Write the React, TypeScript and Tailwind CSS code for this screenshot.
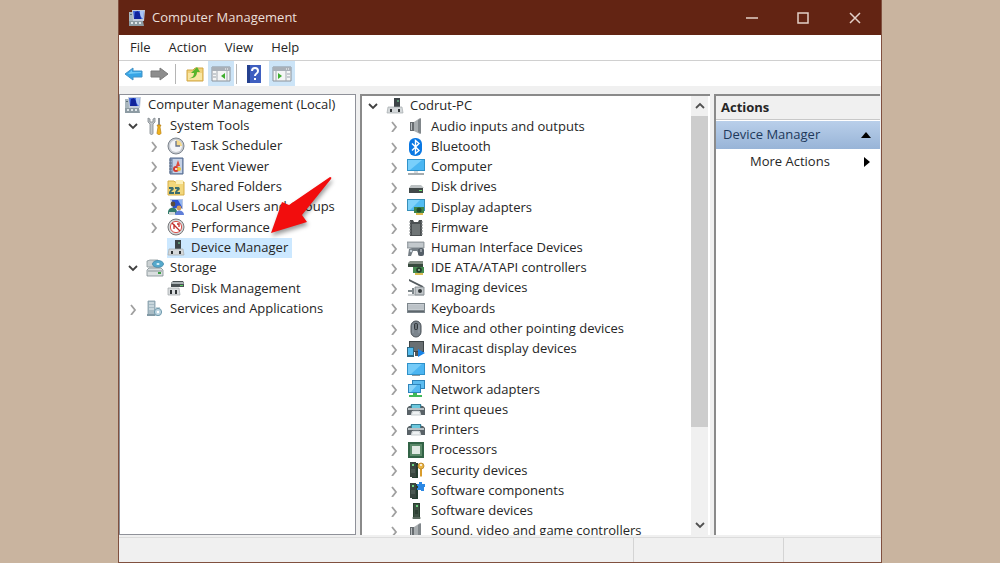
import type { ReactNode } from 'react';

interface TreeItem {
    label: string;
    icon: ReactNode;
    depth: 0 | 1 | 2;
    state?: 'open' | 'closed';
    selected?: boolean;
}

function Icon({ children }: { children: ReactNode }) {
    return (
        <svg viewBox="0 0 18 18" className="size-[18px] shrink-0" aria-hidden="true">
            {children}
        </svg>
    );
}

const computerMgmt = (
    <Icon>
        <path d="M1 3h4v11H1z" fill="#a9b6bd" />
        <path d="M2 5h2v1H2z" fill="#5d7078" />
        <path d="M4 1h13l-1 11H5z" fill="#c3ccda" />
        <path d="M5 2h11l-1 8H6z" fill="#3f66dc" />
        <path d="M12 2h4l-1 8-3-3z" fill="#a9c4f4" />
        <path d="M7 3l3-1 2 3 1 5H6z" fill="#10239c" />
        <path d="M1 12h14l1 5H1z" fill="#8d9ba3" />
        <path d="M3 13h2v2H3zM7 13h2v2H7zM11 13h2v2h-2z" fill="#dfe6ea" />
    </Icon>
);

const tools = (
    <Icon>
        <path d="M2 1v4l2 2v9c0 2 3 2 3 0V7l2-2V1L7 2v3H4V2z" fill="#c2c7cb" stroke="#7f868b" strokeWidth=".8" />
        <path d="M12 1h2v8h-2z" fill="#8a8f94" />
        <path d="M11 8h4l-1 2 1 6c0 2-4 2-4 0l1-6z" fill="#f0b21c" stroke="#b87c0c" strokeWidth=".7" />
    </Icon>
);

const clock = (
    <Icon>
        <circle cx="9" cy="9" r="8" fill="#c7cbd1" stroke="#7c838c" />
        <circle cx="9" cy="9" r="6" fill="#f4f5f8" />
        <path d="M9 3a6 6 0 0 1 6 6H9z" fill="#f5d889" />
        <path d="M9 4v5h4" fill="none" stroke="#66718a" strokeWidth="1.3" />
    </Icon>
);

const eventViewer = (
    <Icon>
        <path d="M3 1h13v16H3z" fill="#91a5c5" stroke="#53688d" />
        <path d="M6 2h9v14H6z" fill="#c5d2e6" />
        <path d="M2 3h3M2 6h3M2 9h3M2 12h3M2 15h3" stroke="#63728a" />
        <path d="M11 3l2 6h-4z" fill="#df4c3c" />
        <circle cx="9" cy="12" r="3" fill="#d33b31" />
        <circle cx="12" cy="12" r="2" fill="#efc33c" />
        <circle cx="9" cy="12" r="1" fill="#fff" />
    </Icon>
);

const sharedFolders = (
    <Icon>
        <path d="M1 3h6l1 1h9v13H1z" fill="#f2d77c" stroke="#d6ad45" />
        <path d="M9 2h7v4H9z" fill="#fbefb9" />
        <path d="M2 9h4l1 2-3 3h3v2H2v-2l2-3H2z" fill="#3b6d70" />
        <path d="M8 9h4l1 2-3 3h3v2H8v-2l2-3H8z" fill="#3b6d70" />
    </Icon>
);

const users = (
    <Icon>
        <path d="M3 1h13v10H5z" fill="#b8c6e4" />
        <path d="M5 2h10v8H6z" fill="#2b52cf" />
        <path d="M11 2h4v7z" fill="#93b5ee" />
        <circle cx="6" cy="6" r="2.4" fill="#5b4c3c" />
        <path d="M1 14c0-5 9-6 9 0v2H1z" fill="#347b6b" />
        <circle cx="12" cy="10" r="2.4" fill="#d29b5a" />
        <path d="M8 17c0-6 9-6 9 0z" fill="#5f7ed8" />
        <path d="M2 14h6v3H2z" fill="#d5dad8" />
    </Icon>
);

const performance = (
    <Icon>
        <circle cx="9" cy="9" r="8" fill="#d4d5d6" stroke="#77797c" />
        <circle cx="9" cy="9" r="5.6" fill="#fff" stroke="#d9524d" />
        <path d="M5 5l8 8M7 11V6M10 6h2v3" fill="none" stroke="#c12b29" strokeWidth="1.3" />
    </Icon>
);

const deviceManager = (
    <Icon>
        <path d="M8 1h6v9H8z" fill="#3d4447" />
        <path d="M11 3h2v2h-2z" fill="#5d9574" />
        <path d="M2 10h14l1 6H1z" fill="#d5d9db" stroke="#a5abae" strokeWidth=".7" />
        <path d="M4 12h2v3H4zM12 12h2v3h-2z" fill="#2f3335" />
    </Icon>
);

const storage = (
    <Icon>
        <path d="M1 2l3-1h8l-1 7H1z" fill="#cbd1d3" stroke="#8c979b" strokeWidth=".8" />
        <ellipse cx="12" cy="5" rx="5.5" ry="3.5" fill="#55a9cc" stroke="#3d86a8" strokeWidth=".8" />
        <ellipse cx="12" cy="5" rx="1.6" ry="1" fill="#e1f5fc" />
        <path d="M1 11l2-2h12l2 2v6H1z" fill="#d9dedf" stroke="#7f8b90" strokeWidth=".8" />
        <path d="M2 12h14" stroke="#8c979b" />
        <path d="M12 13h3v2h-3z" fill="#3e9e47" />
    </Icon>
);

const diskMgmt = (
    <Icon>
        <path d="M4 4l2-2h10l1 2v4H4z" fill="#4a5154" />
        <path d="M5 3h11l1 2H4z" fill="#aab1b4" />
        <path d="M13 6h3v1h-3z" fill="#58d05e" />
        <path d="M1 9h11l1 7H1z" fill="#dadddf" stroke="#9ea4a7" strokeWidth=".7" />
        <path d="M3 11h2v4H3zM8 11h2v4H8z" fill="#303537" />
    </Icon>
);

const services = (
    <Icon>
        <path d="M2 1h7v14H2z" fill="#a9bcc5" stroke="#7f98a4" strokeWidth=".8" />
        <path d="M3 3h5M3 6h5M3 9h5" stroke="#e7f0f4" />
        <path d="M9 7h5v9H9z" fill="#c3d3da" />
        <circle cx="12" cy="12" r="3.6" fill="#bcd5e1" stroke="#6f9aad" />
        <circle cx="12" cy="12" r="1.2" fill="#fff" />
        <path d="M1 14h8v2H1z" fill="#8199a5" />
    </Icon>
);

const speaker = (
    <Icon>
        <path d="M3 5h4v9H3z" fill="#676c70" />
        <path d="M7 5l6-4v16l-6-3z" fill="#a9aeb1" />
        <path d="M11 3l3-2v16l-3-2z" fill="#81878b" />
        <path d="M4 6h1v7H4z" fill="#b9bdc0" />
    </Icon>
);

const bluetooth = (
    <Icon>
        <rect x="2" y="0" width="13" height="18" rx="6" fill="#0a78e3" />
        <path d="M5 5.5l7 7-3.500 3v-13l3.500 3-7 7" fill="none" stroke="#fff" strokeWidth="1.4" />
    </Icon>
);

const computer = (
    <Icon>
        <path d="M0 1h18v12H0z" fill="#2f93cb" />
        <path d="M1 2h16v10H1z" fill="#4bb6f2" />
        <path d="M1 2h14L3 12H1z" fill="#79cffb" />
        <path d="M7 13h4v2H7z" fill="#d5dadd" />
        <path d="M1 15h16v2H1z" fill="#a4abaf" />
    </Icon>
);

const disk = (
    <Icon>
        <path d="M4 7h10l3 3H2z" fill="#bcc1c3" />
        <path d="M2 10h14v5H2z" fill="#414849" />
        <path d="M12 12h3v1h-3z" fill="#6ae56a" />
    </Icon>
);

const displayAdapter = (
    <Icon>
        <path d="M0 1h18v12H0z" fill="#378fb9" />
        <path d="M1 2h16v10H1z" fill="#52bcf3" />
        <path d="M1 2h12L3 12H1z" fill="#7fd2fa" />
        <path d="M7 9h10v6H7z" fill="#3d8448" />
        <circle cx="12" cy="12" r="2.5" fill="#234d2c" />
        <path d="M9 15h7v2H9z" fill="#dcb94d" />
    </Icon>
);

const firmware = (
    <Icon>
        <path d="M3 1h3l1 2h4l1-2h3v16H3z" fill="#4a4f51" />
        <path d="M5 5h8v11H5z" fill="#6f7576" />
        <path d="M2 3h2M2 6h2M2 9h2M2 12h2M2 15h2M14 3h2M14 6h2M14 9h2M14 12h2M14 15h2" stroke="#868b8d" />
    </Icon>
);

const hid = (
    <Icon>
        <path d="M0 3h17v6H0z" fill="#b3babf" stroke="#838b91" strokeWidth=".8" />
        <path d="M2 5h14M2 7h14" stroke="#d2d7da" />
        <path d="M2 10l3-1h6l2 1v4h-2l-1-2H6l-2 5H1z" fill="#747d84" />
        <rect x="11" y="9" width="6" height="8" rx="2" fill="#555f68" />
        <path d="M14 10v3" stroke="#d8dee1" />
        <circle cx="4" cy="12" r="1.2" fill="#c6d1db" />
    </Icon>
);

const ide = (
    <Icon>
        <path d="M1 4l2-2h13v5H1z" fill="#859087" />
        <path d="M1 5h15v3H1z" fill="#384a3e" />
        <path d="M6 8h11v6H6z" fill="#438b50" />
        <circle cx="12" cy="11" r="2.8" fill="#243e2d" />
        <circle cx="12" cy="11" r="1" fill="#9cc3a1" />
        <path d="M8 14h8v2H8z" fill="#d9bd54" />
    </Icon>
);

const imaging = (
    <Icon>
        <path d="M2 0l14 7v2L2 2z" fill="#555c60" />
        <path d="M8 8h9v8H8z" fill="#c2c7ca" stroke="#777f83" strokeWidth=".8" />
        <circle cx="13" cy="12" r="2" fill="#33393c" />
        <path d="M1 11h6v2H1zM5 9h2v6H5z" fill="#7e878b" />
        <path d="M1 16h16" stroke="#9ca3a7" />
    </Icon>
);

const keyboard = (
    <Icon>
        <path d="M0 4h18v10H0z" fill="#7d868c" />
        <path d="M1 5h16v6H1z" fill="#c6ccd1" />
        <path d="M1 7h16M1 9h16" stroke="#b2b9be" />
        <path d="M1 12h16v1H1z" fill="#5d666c" />
    </Icon>
);

const mouse = (
    <Icon>
        <rect x="4" y="1" width="10" height="16" rx="5" fill="#7c858d" stroke="#4a5157" />
        <rect x="7" y="3" width="4" height="7" rx="2" fill="#30363a" />
        <path d="M9 4v5" stroke="#a4adb4" />
        <path d="M6 5v8M12 5v8" stroke="#a4adb4" strokeWidth=".7" />
    </Icon>
);

const miracast = (
    <Icon>
        <path d="M2 1h15v11H2z" fill="#3f4547" />
        <path d="M3 2h13v9H3z" fill="#696f72" />
        <path d="M0 7h7v10H0z" fill="#306983" />
        <path d="M1 8h5v7H1z" fill="#54bcf0" />
        <path d="M11 9v8l7-4z" fill="#1683e8" />
        <path d="M8 12h3v4H8z" fill="#555" />
    </Icon>
);

const monitor = (
    <Icon>
        <path d="M0 3h18v12H0z" fill="#2f91c9" />
        <path d="M1 4h16v10H1z" fill="#4cb5f1" />
        <path d="M1 4h14L4 14H1z" fill="#75cbf8" />
        <path d="M5 15h8v1H5z" fill="#8d999f" />
    </Icon>
);

const network = (
    <Icon>
        <path d="M5 0h13v9H5z" fill="#2e83b8" />
        <path d="M6 1h11v7H6z" fill="#5cbcf0" />
        <path d="M1 4h13v9H1z" fill="#2d83bb" />
        <path d="M2 5h11v7H2z" fill="#54b8f1" />
        <path d="M2 5h8l-6 7H2z" fill="#87d2f8" />
        <path d="M6 13h4v2h5v2H2v-2h4z" fill="#42ba57" />
    </Icon>
);

const printer = (
    <Icon>
        <path d="M4 3h10l1 4H3z" fill="#357e95" />
        <path d="M5 4h8v3H5z" fill="#6cc8dd" />
        <path d="M0 7l2-2h2v2h10V5h2l2 2v7h-4l-1-4H5l-1 4H0z" fill="#596267" />
        <path d="M1 7h16v2H1z" fill="#b7c0c4" />
        <path d="M6 10h6l2 4H4z" fill="#eef1f2" stroke="#a9b2b6" strokeWidth=".6" />
    </Icon>
);

const processor = (
    <Icon>
        <path d="M1 1h16v16H1z" fill="#326346" />
        <path d="M3 3h12v12H3z" fill="#5c8a6a" />
        <path d="M5 5h8v8H5z" fill="#e1e9e3" />
    </Icon>
);

const tower = (
    <>
        <path d="M5 2h6v15H5z" fill="#253d30" />
        <path d="M3 1h6v15H3z" fill="#3a4740" />
        <path d="M5 3h2v2H5z" fill="#6ed57f" />
        <path d="M4 9h4M4 11h4" stroke="#5f6f66" />
    </>
);

const security = (
    <Icon>
        {tower}
        <path d="M13 8h2v7l-1 1-1-1z" fill="#d99c2c" />
        <circle cx="14" cy="5" r="3" fill="#e7b343" stroke="#bd8423" strokeWidth=".8" />
        <circle cx="14" cy="4" r="1" fill="#fff" />
    </Icon>
);

const component = (
    <Icon>
        {tower}
        <path d="M10 2h2V0h3v2h3v3h-1v4h-3V8h-4V6h1V4h-1z" fill="#2b88e4" />
    </Icon>
);

const softwareDevice = (
    <Icon>
        <path d="M6 1h7v16H6z" fill="#28402f" />
        <path d="M7 2h5v13H7z" fill="#3f5145" />
        <path d="M9 3h2v2H9z" fill="#6ed57f" />
        <path d="M8 9h3M8 11h3" stroke="#1e3025" />
        <path d="M5 16h9" stroke="#8b928e" />
    </Icon>
);

const consoleItems: TreeItem[] = [
    { label: 'Computer Management (Local)', icon: computerMgmt, depth: 0 },
    { label: 'System Tools', icon: tools, depth: 1, state: 'open' },
    { label: 'Task Scheduler', icon: clock, depth: 2, state: 'closed' },
    { label: 'Event Viewer', icon: eventViewer, depth: 2, state: 'closed' },
    { label: 'Shared Folders', icon: sharedFolders, depth: 2, state: 'closed' },
    { label: 'Local Users and Groups', icon: users, depth: 2, state: 'closed' },
    { label: 'Performance', icon: performance, depth: 2, state: 'closed' },
    { label: 'Device Manager', icon: deviceManager, depth: 2, selected: true },
    { label: 'Storage', icon: storage, depth: 1, state: 'open' },
    { label: 'Disk Management', icon: diskMgmt, depth: 2 },
    { label: 'Services and Applications', icon: services, depth: 1, state: 'closed' },
];

const deviceItems: TreeItem[] = [
    { label: 'Codrut-PC', icon: deviceManager, depth: 1, state: 'open' },
    { label: 'Audio inputs and outputs', icon: speaker, depth: 2, state: 'closed' },
    { label: 'Bluetooth', icon: bluetooth, depth: 2, state: 'closed' },
    { label: 'Computer', icon: computer, depth: 2, state: 'closed' },
    { label: 'Disk drives', icon: disk, depth: 2, state: 'closed' },
    { label: 'Display adapters', icon: displayAdapter, depth: 2, state: 'closed' },
    { label: 'Firmware', icon: firmware, depth: 2, state: 'closed' },
    { label: 'Human Interface Devices', icon: hid, depth: 2, state: 'closed' },
    { label: 'IDE ATA/ATAPI controllers', icon: ide, depth: 2, state: 'closed' },
    { label: 'Imaging devices', icon: imaging, depth: 2, state: 'closed' },
    { label: 'Keyboards', icon: keyboard, depth: 2, state: 'closed' },
    { label: 'Mice and other pointing devices', icon: mouse, depth: 2, state: 'closed' },
    { label: 'Miracast display devices', icon: miracast, depth: 2, state: 'closed' },
    { label: 'Monitors', icon: monitor, depth: 2, state: 'closed' },
    { label: 'Network adapters', icon: network, depth: 2, state: 'closed' },
    { label: 'Print queues', icon: printer, depth: 2, state: 'closed' },
    { label: 'Printers', icon: printer, depth: 2, state: 'closed' },
    { label: 'Processors', icon: processor, depth: 2, state: 'closed' },
    { label: 'Security devices', icon: security, depth: 2, state: 'closed' },
    { label: 'Software components', icon: component, depth: 2, state: 'closed' },
    { label: 'Software devices', icon: softwareDevice, depth: 2, state: 'closed' },
    { label: 'Sound, video and game controllers', icon: speaker, depth: 2, state: 'closed' },
];

const indent = { 0: 'pl-[4px]', 1: 'pl-[5px]', 2: 'pl-[26px]' };

function Chevron({ d, className }: { d: string; className: string }) {
    return (
        <svg viewBox="0 0 12 12" className={`size-3 fill-none ${className}`} strokeWidth="1.8" aria-hidden="true">
            <path d={d} />
        </svg>
    );
}

function Tree({ items, label, className }: { items: TreeItem[]; label: string; className: string }) {
    return (
        <ul role="tree" aria-label={label} className={`flex shrink-0 flex-col ${className}`}>
            {items.map((item) => (
                <li
                    key={item.label}
                    role="treeitem"
                    aria-selected={item.selected ?? false}
                    className={`flex min-h-0 flex-1 items-center ${indent[item.depth]}`}
                >
                    {item.depth > 0 && (
                        <span className="flex w-[21px] shrink-0">
                            {item.state && (
                                <button aria-label={`Toggle ${item.label}`} className="flex p-[2px]">
                                    {item.state === 'open' ? (
                                        <Chevron d="M2 4l4 4 4-4" className="stroke-[#404040]" />
                                    ) : (
                                        <Chevron d="M4 2l4 5-4 5" className="stroke-[#a0a0a0]" />
                                    )}
                                </button>
                            )}
                        </span>
                    )}
                    <button
                        className={`flex h-full items-center gap-[6px] pr-[4px] whitespace-nowrap ${item.selected ? 'bg-[#cce8ff]' : ''}`}
                    >
                        {item.icon}
                        {item.label}
                    </button>
                </li>
            ))}
        </ul>
    );
}

function PaneIcon({ flip }: { flip?: boolean }) {
    return (
        <svg viewBox="0 0 20 16" className="h-4 w-5" aria-hidden="true">
            <path d="M1 1h18v14H1z" fill="#f4f5f6" stroke="#8b929a" />
            <path d="M1 1h18v4H1z" fill="#a9b0b8" />
            <path d="M14 3h1M16 3h1" stroke="#fff" />
            <path d={flip ? 'M14 5v10M4 5v10' : 'M6 5v10M16 5v10'} stroke="#a3aab1" />
            <path d={flip ? 'M6 7v6l4-3z' : 'M14 7v6l-4-3z'} fill="#3fae2e" />
            <path d={flip ? 'M15 8h3M15 11h3' : 'M2 8h3M2 11h3'} stroke="#9aa3ac" />
        </svg>
    );
}

function Toolbar() {
    return (
        <div role="toolbar" className="flex h-[25px] shrink-0 items-center bg-white pl-[5px]">
            <button aria-label="Back" className="flex">
                <svg viewBox="0 0 20 16" className="h-4 w-5">
                    <path d="M1 8l8-6v3h9v6H9v3z" fill="#36a5e6" stroke="#4593c6" />
                    <path d="M4 8l4-4v2h9v1z" fill="#6fcaf8" />
                </svg>
            </button>
            <button aria-label="Forward" className="ml-[5px] flex">
                <svg viewBox="0 0 20 16" className="h-4 w-5">
                    <path d="M19 8l-8-6v3H2v6h9v3z" fill="#8d8d8d" stroke="#7b7b7b" />
                </svg>
            </button>
            <span className="mx-[6px] h-5 w-px bg-[#b5b5b5]" />
            <button aria-label="Up one level" className="flex w-[26px] justify-center">
                <svg viewBox="0 0 18 18" className="size-[18px]">
                    <path d="M1 5h6l2-2h8v13H1z" fill="#f1d27a" stroke="#d1a645" />
                    <path d="M2 8h14v7H2z" fill="#f9e6a4" />
                    <path d="M3 13c3 0 5-2 5-5H5l6-6 3 5h-3c0 4-3 7-8 6z" fill="#58b52c" />
                </svg>
            </button>
            <button aria-label="Show or hide console tree" className="flex h-full w-[26px] items-center justify-center bg-[#cce4f7]">
                <PaneIcon />
            </button>
            <span className="mx-[2px] h-5 w-px bg-[#b5b5b5]" />
            <button aria-label="Help" className="flex w-[30px] justify-center">
                <svg viewBox="0 0 16 18" className="h-[18px] w-4">
                    <path d="M1 0h14v18H1z" fill="#3f5fc0" />
                    <path d="M1 0h3v18H1z" fill="#24408f" />
                    <path d="M6 6c0-4 6-4 6 0 0 3-3 2-3 5" fill="none" stroke="#fff" strokeWidth="2" />
                    <path d="M8 13h2v2H8z" fill="#fff" />
                </svg>
            </button>
            <button aria-label="Show or hide action pane" className="flex h-full w-[26px] items-center justify-center bg-[#cce4f7]">
                <PaneIcon flip />
            </button>
        </div>
    );
}

function TitleBar() {
    return (
        <header className="flex h-[35px] shrink-0 items-center bg-[#632413] pl-[9px] text-[#eadfd9]">
            {computerMgmt}
            <h1 className="ml-[6px] flex-1">Computer Management</h1>
            <button aria-label="Minimize" className="flex w-[51px] justify-center">
                <svg viewBox="0 0 12 12" className="size-3 fill-none stroke-[#e3d0c8]">
                    <path d="M0 6h12" strokeWidth="1.5" />
                </svg>
            </button>
            <button aria-label="Maximize" className="flex w-[51px] justify-center">
                <svg viewBox="0 0 12 12" className="size-3 fill-none stroke-[#e3d0c8]">
                    <path d="M1 1h10v10H1z" strokeWidth="1.5" />
                </svg>
            </button>
            <button aria-label="Close" className="flex w-[53px] justify-center">
                <svg viewBox="0 0 12 12" className="size-3 fill-none stroke-[#e3d0c8]">
                    <path d="M1 1l10 10M11 1L1 11" strokeWidth="1.5" />
                </svg>
            </button>
        </header>
    );
}

function Scrollbar() {
    return (
        <div className="mr-[2px] flex w-[17px] shrink-0 flex-col items-center bg-[#f0f0f0]">
            <button aria-label="Scroll up" className="flex h-[20px] items-center">
                <Chevron d="M2 8l4-4 4 4" className="stroke-[#505050]" />
            </button>
            <div className="min-h-0 w-full flex-1">
                <div className="h-[78%] bg-[#cdcdcd]" />
            </div>
            <button aria-label="Scroll down" className="flex h-[20px] items-center">
                <Chevron d="M2 4l4 4 4-4" className="stroke-[#505050]" />
            </button>
        </div>
    );
}

function Actions() {
    return (
        <aside className="flex w-[166px] shrink-0 flex-col border-t-2 border-l-2 border-[#8a8a8a] bg-white">
            <h2 className="h-[24px] border-b border-[#c8c8c8] bg-[#f0f0f0] pl-[5px] leading-[22px] font-bold">Actions</h2>
            <button className="mt-px flex h-[28px] items-center justify-between bg-linear-to-b from-[#b9cfea] to-[#98b4d7] pr-[9px] pl-[7px] text-[#1e395b]">
                Device Manager
                <svg viewBox="0 0 10 6" className="h-[6px] w-[10px]">
                    <path d="M0 6l5-6 5 6z" />
                </svg>
            </button>
            <button className="flex h-[26px] items-center justify-between pr-[10px] pl-[34px]">
                More Actions
                <svg viewBox="0 0 6 10" className="h-[10px] w-[6px]">
                    <path d="M0 0l6 5-6 5z" />
                </svg>
            </button>
        </aside>
    );
}

function RedArrow() {
    return (
        <svg
            viewBox="0 0 66 62"
            className="pointer-events-none absolute top-[81px] left-[150px] h-[62px] w-[66px] drop-shadow-[1px_3px_2px_rgba(0,0,0,0.4)]"
            aria-hidden="true"
        >
            <path d="M1 57L12 26l7 3L60 1q2 0 1 2L32 39l5 7z" fill="#f20d0d" />
        </svg>
    );
}

export default function App() {
    return (
        <div className="h-screen bg-[#c9b49f] px-[118px] font-['Open_Sans','Noto_Sans',sans-serif] text-[13px] text-[#262626]">
            <div className="flex h-full flex-col border-x border-b border-[#80503f] bg-[#f0f0f0]">
                <TitleBar />
                <nav className="flex h-[26px] shrink-0 items-center gap-[18px] border-b border-[#d0d0d0] bg-white pl-[11px]">
                    <button>File</button>
                    <button>Action</button>
                    <button>View</button>
                    <button>Help</button>
                </nav>
                <Toolbar />
                <main className="mt-[8px] flex min-h-0 flex-1 gap-[4px] pr-px">
                    <section className="relative w-[237px] shrink-0 border border-[#8f9199] bg-white">
                        <Tree items={consoleItems} label="Console" className="h-[224px]" />
                        <RedArrow />
                    </section>
                    <section className="flex min-w-0 flex-1 border-t-2 border-l-2 border-[#8a8a8a] bg-white">
                        <div className="-ml-[2px] min-w-0 flex-1 overflow-hidden">
                            <Tree items={deviceItems} label="Devices" className="h-[445px]" />
                        </div>
                        <Scrollbar />
                    </section>
                    <Actions />
                </main>
                <footer className="mt-[2px] flex h-[25px] shrink-0 justify-end border-t border-[#dcdcdc]">
                    <span className="w-[150px] border-l border-[#d4d4d4]" />
                    <span className="w-[98px] border-l border-[#d4d4d4]" />
                </footer>
            </div>
        </div>
    );
}
